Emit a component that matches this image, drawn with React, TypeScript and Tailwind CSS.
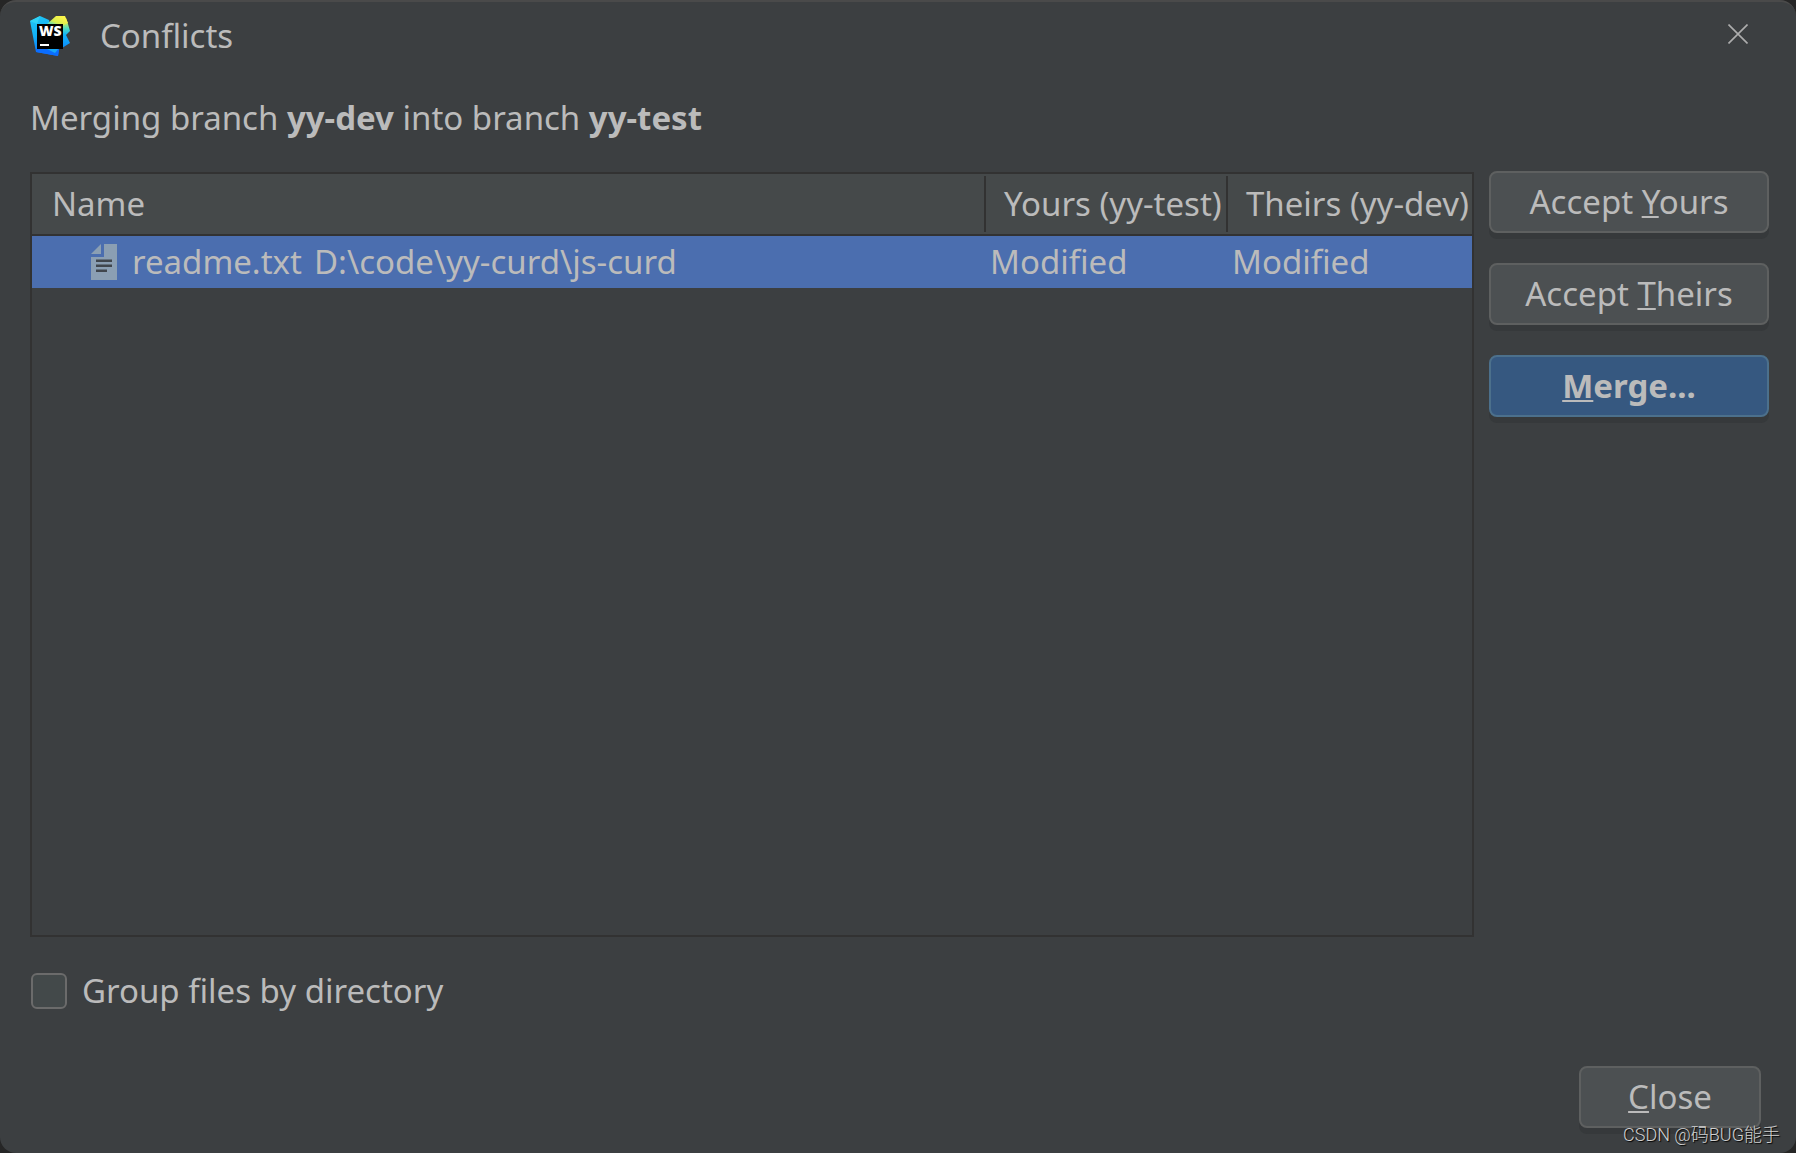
import type { ReactNode } from 'react'

type Conflict = {
    name: string
    path: string
    yours: string
    theirs: string
}

const conflicts: Conflict[] = [
    { name: 'readme.txt', path: 'D:\\code\\yy-curd\\js-curd', yours: 'Modified', theirs: 'Modified' },
]

const WebStormIcon = () => (
    <svg className="w-10 h-10" viewBox="0 0 40 40" aria-hidden="true">
        <defs>
            <linearGradient id="ws-left" x1="0" y1="0" x2="0.3" y2="1">
                <stop offset="0" stopColor="#22c8f5" />
                <stop offset="0.5" stopColor="#12b0f5" />
                <stop offset="1" stopColor="#0a6cff" />
            </linearGradient>
            <linearGradient id="ws-top" x1="0" y1="1" x2="0.8" y2="0.2">
                <stop offset="0.1" stopColor="#2fd6e0" />
                <stop offset="0.5" stopColor="#d8ee50" />
                <stop offset="1" stopColor="#fbf54a" />
            </linearGradient>
            <linearGradient id="ws-right" x1="0" y1="0" x2="0" y2="1">
                <stop offset="0.1" stopColor="#eaf24a" />
                <stop offset="0.35" stopColor="#4fdcc0" />
                <stop offset="0.55" stopColor="#12b5f7" />
                <stop offset="1" stopColor="#0b8cff" />
            </linearGradient>
        </defs>
        <path d="M0 5 10 0l9 4 6 29 4 1-1 6L6 36Z" fill="url(#ws-left)" />
        <path d="M30 2h6l2 6 2 7-4 4 4 8-8 5-8-3V9Z" fill="url(#ws-right)" />
        <path d="m17 8 9-8h9l3 7-6 3H17Z" fill="url(#ws-top)" />
        <path d="M6 33h23l-1 7-22-4Z" fill="#0b6dff" />
        <path d="m17 33 12-1-4 5Z" fill="#16a8f8" />
        <path d="M0 5 7 8l3-8Z" fill="#30d2f6" />
        <path d="M7 8h26v25H7Z" fill="#000" />
        <path d="M10 28h9v2h-9Z" fill="#fff" />
        <text x="9" y="20" fontSize="14" fontWeight="800" fill="#fff" fontFamily="Open Sans, sans-serif">WS</text>
    </svg>
)

const CloseIcon = () => (
    <svg className="w-5 h-5" viewBox="0 0 20 20" fill="none" stroke="#adadad" strokeWidth="1.6" aria-hidden="true">
        <path d="M0.5 0.5 19.5 19.5M19.5 0.5 0.5 19.5" />
    </svg>
)

const TextFileIcon = () => (
    <svg className="w-[26px] h-9 shrink-0" viewBox="0 0 26 36" aria-hidden="true">
        <path d="M10 0v10H0Z" fill="#8b9fb3" />
        <path d="M13 0h13v36H0V13h13Z" fill="#8b9fb3" />
        <path d="M5 15.5h16v2.5H5ZM5 20.500h16v2.500H5ZM5 25.500h11v2.500H5Z" fill="#40464d" />
    </svg>
)

function DialogButton({ primary, children }: { primary?: boolean, children: ReactNode }) {
    return (
        <button
            type="button"
            className={
                primary
                    ? 'w-full h-[62px] rounded-lg border-2 border-[#4c708c] bg-[#365880] font-bold shadow-[0_6px_0_#36393b]'
                    : 'w-full h-[62px] rounded-lg border-2 border-[#5e6060] bg-[#4c5052] shadow-[0_6px_0_#36393b]'
            }
        >
            {children}
        </button>
    )
}

// Underlined shortcut letter
function Mnemonic({ children }: { children: string }) {
    return <span className="underline decoration-2 underline-offset-2 [text-decoration-skip-ink:none]">{children}</span>
}

export default function App() {
    return (
        <div className="min-h-screen bg-[#262626]">
            <main className="relative min-h-screen flex flex-col rounded-2xl border-t-2 border-[#4a4a4a] bg-[#3c3f41] text-[#bbbbbb] text-[33px] leading-[44px] font-['Noto_Sans','Noto_Sans_CJK_SC',sans-serif]">
                <header className="h-[68px] pl-[30px] pr-12 flex items-center justify-between">
                    <div className="flex items-center gap-[30px]">
                        <WebStormIcon />
                        <h1>Conflicts</h1>
                    </div>
                    <button type="button" aria-label="Close dialog" className="pb-1">
                        <CloseIcon />
                    </button>
                </header>

                <p className="pt-[26px] px-[30px]">
                    Merging branch <b>yy-dev</b> into branch <b>yy-test</b>
                </p>

                <div className="grow pt-[31px] pl-[30px] pr-[27px] flex gap-[15px]">
                    <section className="grow mt-px border-2 border-[#323232]">
                        <table className="w-full table-fixed border-collapse text-left whitespace-nowrap">
                            <colgroup>
                                <col />
                                <col className="w-[242px]" />
                                <col className="w-[246px]" />
                            </colgroup>
                            <thead>
                                <tr className="h-[61px] bg-[#45494a] border-b-2 border-[#323232]">
                                    <th className="p-0 pl-5 font-normal">Name</th>
                                    <th className="p-0 font-normal">
                                        <div className="h-14 pl-[18px] border-l-2 border-[#323232] flex items-center">Yours (yy-test)</div>
                                    </th>
                                    <th className="p-0 font-normal">
                                        <div className="h-14 pl-[18px] border-l-2 border-[#323232] flex items-center">Theirs (yy-dev)</div>
                                    </th>
                                </tr>
                            </thead>
                            <tbody>
                                {conflicts.map((file) => (
                                    <tr key={file.name} className="h-[53px] bg-[#4b6eaf]">
                                        <td className="p-0 pl-[59px]">
                                            <div className="flex items-center gap-[15px]">
                                                <TextFileIcon />
                                                <div className="flex gap-3">
                                                    <span>{file.name}</span>
                                                    <span>{file.path}</span>
                                                </div>
                                            </div>
                                        </td>
                                        <td className="p-0 pl-[6px]">{file.yours}</td>
                                        <td className="p-0 pl-[6px]">{file.theirs}</td>
                                    </tr>
                                ))}
                            </tbody>
                        </table>
                    </section>

                    <aside className="w-[280px] shrink-0 flex flex-col gap-[30px]">
                        <DialogButton>Accept <Mnemonic>Y</Mnemonic>ours</DialogButton>
                        <DialogButton>Accept <Mnemonic>T</Mnemonic>heirs</DialogButton>
                        <DialogButton primary><Mnemonic>M</Mnemonic>erge...</DialogButton>
                    </aside>
                </div>

                <label className="mt-8 ml-[31px] self-start flex items-center gap-[15px]">
                    <input type="checkbox" className="appearance-none w-9 h-9 rounded-md border-2 border-[#6b6b6b] bg-[#43494a]" />
                    Group files by directory
                </label>

                <footer className="pt-[53px] pb-[25px] pr-[35px] flex justify-end">
                    <div className="w-[182px]">
                        <DialogButton><Mnemonic>C</Mnemonic>lose</DialogButton>
                    </div>
                </footer>

                <span className="absolute right-4 bottom-1 text-[18px] leading-7 text-[#d0d0d0] [text-shadow:1px_1px_1px_#000] font-['Roboto','Noto_Sans_CJK_SC',sans-serif] font-light">
                    CSDN @码BUG能手
                </span>
            </main>
        </div>
    )
}
